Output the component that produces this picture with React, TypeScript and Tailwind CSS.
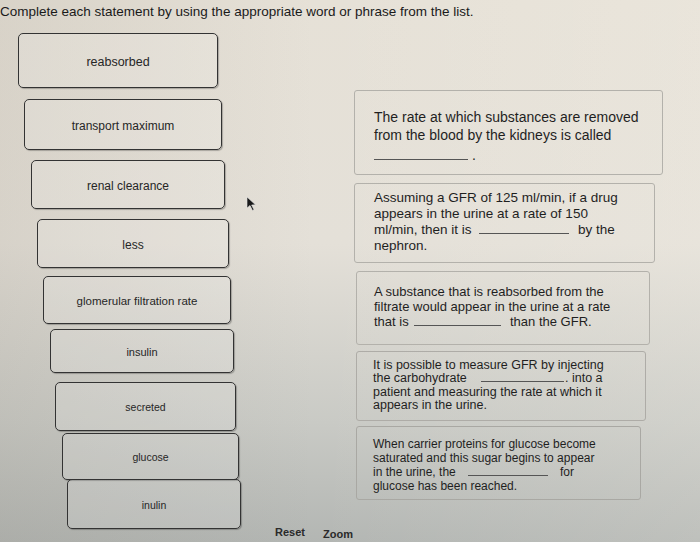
const FONT = { fontFamily: '"Liberation Sans", Arial, sans-serif' };

const tiles = [
  { label: "reabsorbed", cls: "ml-[18px] mt-[12px] w-[200px] h-[55px]", text: "text-[12.5px]" },
  { label: "transport maximum", cls: "ml-[24px] mt-[11px] w-[198px] h-[51px]", text: "text-[12px]" },
  { label: "renal clearance", cls: "ml-[31px] mt-[10px] w-[194px] h-[49px]", text: "text-[12px]" },
  { label: "less", cls: "ml-[37px] mt-[10px] w-[192px] h-[49px]", text: "text-[12px]" },
  { label: "glomerular filtration rate", cls: "ml-[43px] mt-[8px] w-[188px] h-[48px]", text: "text-[11.5px]" },
  { label: "insulin", cls: "ml-[50px] mt-[5px] w-[184px] h-[44px]", text: "text-[11px]" },
  { label: "secreted", cls: "ml-[55px] mt-[9px] w-[181px] h-[49px]", text: "text-[10.5px]" },
  { label: "glucose", cls: "ml-[62px] mt-[2px] w-[177px] h-[47px]", text: "text-[10.5px]" },
];

function Tile({ label, cls, text }: { label: string; cls: string; text: string }) {
  return (
    <div
      className={`${cls} flex shrink-0 items-center justify-center rounded-[5px] border-[1.5px] border-[#333] bg-white/15 pt-[4px] shadow-[1px_1px_1px_rgba(0,0,0,0.25)]`}
    >
      <span className={`${text} text-[#262626]`}>{label}</span>
    </div>
  );
}

function Blank({ w }: { w: string }) {
  return <span className={`inline-block ${w} border-b border-[#555] align-baseline`} />;
}

export default function App() {
  return (
    <div
      className="relative h-[542px] w-[700px] overflow-hidden bg-[linear-gradient(180deg,#e6e1d7_0%,#e4e0d8_45%,#c9cac5_78%,#b3b6b3_100%)]"
      style={FONT}
    >
      <div className="pointer-events-none absolute inset-0 bg-[linear-gradient(90deg,rgba(120,110,95,0.12)_0%,rgba(255,255,255,0)_45%,rgba(255,250,240,0.15)_100%)]" />
      <div className="relative flex h-full flex-col">
        <div className="h-[24px] pt-[3px] text-[13.5px] leading-[17px] text-[#1a1a1a]">
          Complete each statement by using the appropriate word or phrase from the list.
        </div>
        <div className="flex flex-1">
          <div className="flex w-[354px] shrink-0 flex-col">
            {tiles.map((t) => (
              <Tile key={t.label} {...t} />
            ))}
            <div className="flex items-start">
              <Tile label="inulin" cls="ml-[67px] mt-[-1px] w-[174px] h-[50px]" text="text-[10.5px]" />
              <div className="ml-[34px] mt-[44px] flex gap-[18px] text-[11px] font-bold text-[#2a2a2a]">
                <span>Reset</span>
                <span className="mt-[2px]">Zoom</span>
              </div>
            </div>
          </div>

          <div className="flex flex-col text-[#1f1f1f]">
            <div className="mt-[69px] h-[85px] w-[309px] rounded-[3px] border-[1.5px] border-[#b3b1ab] pl-[19px] pt-[17px] text-[14px] leading-[18px]">
              The rate at which substances are removed
              <br />
              from the blood by the kidneys is called
              <div className="mt-[6px] flex items-end">
                <Blank w="w-[94px]" />
                <span className="ml-[4px] leading-[10px]">.</span>
              </div>
            </div>

            <div className="mt-[8px] h-[80px] w-[301px] rounded-[3px] border-[1.5px] border-[#b3b1ab] pl-[19px] pt-[6px] text-[13.5px] leading-[16px]">
              Assuming a GFR of 125 ml/min, if a drug
              <br />
              appears in the urine at a rate of 150
              <br />
              <span className="inline-block w-[105px]">ml/min, then it is</span>
              <Blank w="w-[90px]" />
              <span className="ml-[9px]">by the</span>
              <br />
              nephron.
            </div>

            <div className="mt-[8px] ml-[2px] h-[74px] w-[294px] rounded-[3px] border-[1.5px] border-[#b3b1ab] pl-[17px] pt-[12px] text-[13px] leading-[15px]">
              A substance that is reabsorbed from the
              <br />
              filtrate would appear in the urine at a rate
              <br />
              <span className="inline-block w-[40px]">that is</span>
              <Blank w="w-[87px]" />
              <span className="ml-[9px]">than the GFR.</span>
            </div>

            <div className="mt-[6px] ml-[2px] h-[70px] w-[290px] rounded-[3px] border-[1.5px] border-[#aeaca7] pl-[16px] pt-[7px] text-[12.5px] leading-[13.5px]">
              It is possible to measure GFR by injecting
              <br />
              <span className="inline-block w-[108px]">the carbohydrate</span>
              <Blank w="w-[83px]" />
              <span className="ml-[1px]">. into a</span>
              <br />
              patient and measuring the rate at which it
              <br />
              appears in the urine.
            </div>

            <div className="mt-[5px] ml-[2px] h-[74px] w-[285px] rounded-[3px] border-[1.5px] border-[#a9a8a3] pl-[16px] pt-[10px] text-[12px] leading-[14px]">
              When carrier proteins for glucose become
              <br />
              saturated and this sugar begins to appear
              <br />
              <span className="inline-block w-[95px]">in the urine, the</span>
              <Blank w="w-[80px]" />
              <span className="ml-[12px]">for</span>
              <br />
              glucose has been reached.
            </div>
          </div>
        </div>
      </div>

      {/* mouse pointer over the screen */}
      <svg className="absolute left-[246px] top-[196px]" width="12" height="16" viewBox="0 0 12 16">
        <path d="M1 1 L1 12 L4 9.5 L6.5 14.5 L8 13.8 L5.6 9 L9.5 8.8 Z" fill="#1a1a1a" stroke="#e5e5e5" strokeWidth="0.6" />
      </svg>
    </div>
  );
}
